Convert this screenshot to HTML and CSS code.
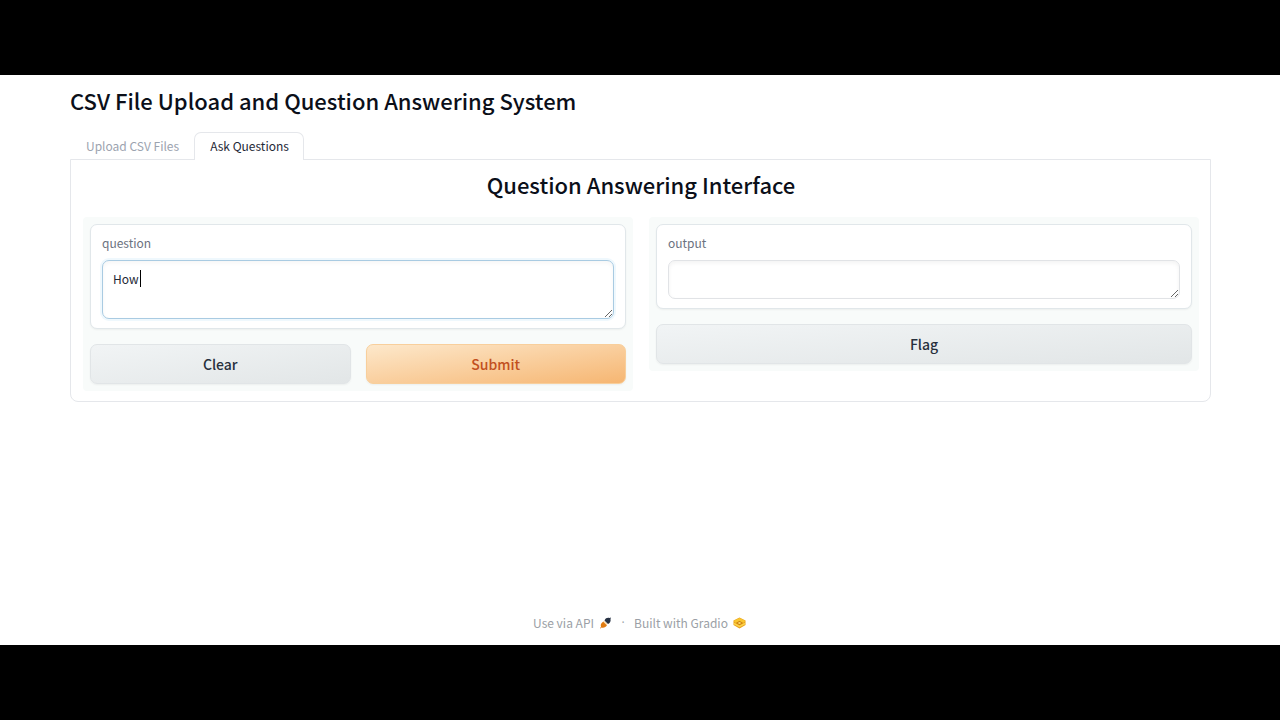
FILE: index.html
```html
<!DOCTYPE html>
<html lang="en">
<head>
<meta charset="utf-8">
<title>CSV File Upload and Question Answering System</title>
<link rel="stylesheet" href="styles.css">
</head>
<body>
<div class="app">
  <main class="content">
    <h1 class="title">CSV File Upload and Question Answering System</h1>
    <div class="tabs" role="tablist">
      <button class="tab" type="button" role="tab" aria-selected="false">Upload CSV Files</button>
      <button class="tab tab-active" type="button" role="tab" aria-selected="true">Ask Questions</button>
    </div>
    <section class="panel" role="tabpanel">
      <h2 class="title panel-title">Question Answering Interface</h2>
      <div class="columns">
        <div class="column">
          <div class="block">
            <label class="label" for="question">question</label>
            <div class="field">
              <textarea class="input input-tall input-focus" id="question">How </textarea>
              <span class="caret"></span>
            </div>
          </div>
          <div class="actions">
            <button class="button" type="button">Clear</button>
            <button class="button button-primary" type="button">Submit</button>
          </div>
        </div>
        <div class="column">
          <div class="block">
            <label class="label" for="output">output</label>
            <div class="field">
              <textarea class="input" id="output" readonly></textarea>
            </div>
          </div>
          <div class="actions">
            <button class="button" type="button">Flag</button>
          </div>
        </div>
      </div>
    </section>
  </main>
  <footer class="footer">
    <a class="footer-link" href="#api">Use via API
      <svg class="icon" viewBox="0 0 24 24" aria-hidden="true">
        <path d="M1 23 3 19C1 15 4 11 8 9l7 7c-2 5-7 6-11 5l-2 2z" fill="#e07b12"/>
        <path d="M8 10 10 8l6 6-2 2z" fill="#f8d9a8"/>
        <path d="M10 7c2-5 6-6 10-5l3-1-1 3c1 5-1 8-5 10z" fill="#273244"/>
      </svg>
    </a>
    <span class="dot">·</span>
    <a class="footer-link" href="#gradio">Built with Gradio
      <svg class="icon" viewBox="0 0 26 24" aria-hidden="true">
        <path d="M13 1 25 7v9l-12 7L1 16V7z" fill="#e9a11b"/>
        <path d="M13 2 25 8l-5 4-7-4-7 4-5-4z" fill="#f8c52e"/>
        <path d="m6 12 7-4 7 4-7 4z" fill="#c97d0c"/>
        <path d="m9 12 4-2 4 2-4 2z" fill="#fce078"/>
        <path d="m2 13 11 6 11-6" fill="none" stroke="#fbd34b" stroke-width="3"/>
      </svg>
    </a>
  </footer>
</div>
</body>
</html>
```
FILE: styles.css
```css
* {
  box-sizing: border-box;
}

body {
  margin: 0;
  background: #000;
  font-family: "Noto Sans CJK SC", "Open Sans", sans-serif;
  font-size: 12px;
  line-height: 20px;
  color: #1f2937;
}

.app {
  display: flex;
  flex-direction: column;
  min-height: calc(100vh - 150px);
  margin: 75px 0;
  padding: 10px 69px 12px 70px;
  background: #fff;
}

.content {
  flex: 1;
}

.title {
  margin: 0;
  font-size: 22px;
  line-height: 30px;
  font-weight: 500;
  color: #0b0f19;
}

.tabs {
  display: flex;
  margin-top: 17px;
}

.tab {
  height: 28px;
  padding: 0 14px 2px 15px;
  border: 1px solid transparent;
  border-bottom: 0;
  border-radius: 7px 7px 0 0;
  background: none;
  font: inherit;
  color: #9ca3af;
}

.tab-active {
  position: relative;
  z-index: 1;
  border-color: #e5e7eb;
  background: #fff;
  color: #1f2937;
}

.panel {
  margin-top: -1px;
  padding: 9px 11px 10px 12px;
  border: 1px solid #e5e7eb;
  border-radius: 0 0 8px 8px;
}

.panel-title {
  text-align: center;
}

.columns {
  display: flex;
  align-items: flex-start;
  gap: 16px;
  margin-top: 18px;
}

.column {
  flex: 1;
  display: flex;
  flex-direction: column;
  gap: 15px;
  min-width: 0;
  padding: 7px;
  border-radius: 4px;
  background: #f8fbfa;
}

.block {
  padding: 8px 11px 9px;
  border: 1px solid #e1e7ea;
  border-radius: 7px;
  background: #fff;
  box-shadow: 0 1px 2px rgba(0, 0, 0, 0.05);
}

.label {
  display: block;
  margin-bottom: 7px;
  color: #6b7280;
}

.field {
  position: relative;
}

.input {
  display: block;
  width: 100%;
  height: 39px;
  padding: 8px 10px;
  border: 1px solid #e1e3e6;
  border-radius: 7px;
  background: #fff;
  box-shadow: inset 0 2px 4px rgba(0, 0, 0, 0.05);
  font: inherit;
  color: #1f2937;
  outline: none;
  resize: vertical;
}

.input-tall {
  height: 59px;
}

.input-focus {
  border-color: #a9cbe2;
  box-shadow: 0 0 0 2px #eff8fd, inset 0 2px 4px rgba(0, 0, 0, 0.04);
}

.caret {
  position: absolute;
  top: 10px;
  left: 38px;
  width: 1px;
  height: 17px;
  background: #000;
}

.actions {
  display: flex;
  gap: 15px;
}

.button {
  flex: 1;
  height: 40px;
  padding: 0 16px;
  border: 1px solid #e1e5e7;
  border-radius: 7px;
  background: linear-gradient(to bottom right, #f1f4f5, #e2e6e7);
  box-shadow: 0 1px 2px rgba(0, 0, 0, 0.05);
  font: inherit;
  font-size: 14px;
  font-weight: 500;
  color: #27303d;
}

.button-primary {
  border-color: #f8cf9c;
  background: linear-gradient(to bottom right, #fde8cb, #f6b672);
  color: #c2501f;
}

.footer {
  display: flex;
  justify-content: center;
  gap: 8px;
  padding-right: 2px;
  color: #9b9fa6;
}

.footer-link {
  display: flex;
  align-items: center;
  gap: 5px;
  color: inherit;
  text-decoration: none;
}

.dot {
  width: 6px;
  font-family: "Open Sans", sans-serif;
  text-align: center;
}

.icon {
  width: 13px;
  height: 12px;
}
```
